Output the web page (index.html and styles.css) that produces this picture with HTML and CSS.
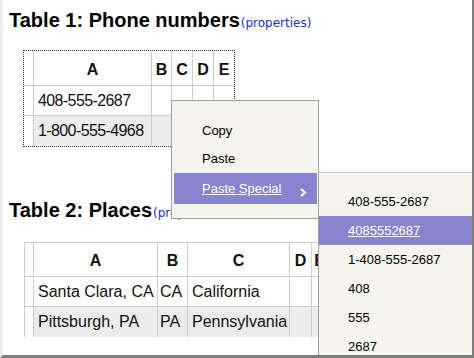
FILE: index.html
```html
<!DOCTYPE html>
<html>
<head>
<meta charset="utf-8">
<link rel="stylesheet" href="styles.css">
</head>
<body>
<div class="frame">
  <h1 class="title">Table 1: Phone numbers<span class="props">(properties)</span></h1>
  <div class="t1">
    <div class="grid g1">
      <div class="c"></div><div class="c h">A</div><div class="c h">B</div><div class="c h">C</div><div class="c h">D</div><div class="c h last">E</div>
      <div class="c"></div><div class="c num">408-555-2687</div><div class="c"></div><div class="c"></div><div class="c"></div><div class="c last"></div>
      <div class="c end"></div><div class="c end g num">1-800-555-4968</div><div class="c end g"></div><div class="c end g"></div><div class="c end g"></div><div class="c end g last"></div>
    </div>
  </div>
  <h1 class="title t2title">Table 2: Places<span class="props">(properties)</span></h1>
  <div class="t2">
    <div class="grid g2">
      <div class="c"></div><div class="c h">A</div><div class="c h">B</div><div class="c h">C</div><div class="c h">D</div><div class="c h">E</div><div class="c"></div>
      <div class="c"></div><div class="c">Santa Clara, CA</div><div class="c nb">CA</div><div class="c">California</div><div class="c"></div><div class="c"></div><div class="c"></div>
      <div class="c end"></div><div class="c end g">Pittsburgh, PA</div><div class="c end g nb">PA</div><div class="c end g">Pennsylvania</div><div class="c end g"></div><div class="c end g"></div><div class="c end g"></div>
    </div>
  </div>

  <div class="menu">
    <div class="mi m1">Copy</div>
    <div class="mi m2">Paste</div>
    <div class="mi m3 sel">Paste Special<svg class="arrow" width="7" height="9" viewBox="0 0 7 9"><polyline points="1,1 5,4.5 1,8" fill="none" stroke="#fff" stroke-width="2"/></svg></div>
  </div>
  <div class="sub">
    <div class="si">408-555-2687</div>
    <div class="si sel">4085552687</div>
    <div class="si">1-408-555-2687</div>
    <div class="si">408</div>
    <div class="si">555</div>
    <div class="si">2687</div>
  </div>
</div>
</body>
</html>
```
FILE: styles.css
```css
html, body {
  margin: 0;
  padding: 0;
  background: #fff;
}
.frame {
  position: relative;
  width: 474px;
  height: 358px;
  box-sizing: border-box;
  border-left: 3px solid #ececec;
  border-right: 2px solid #7d7d7d;
  border-bottom: 3px solid #7d7d7d;
  background: #fff;
  overflow: hidden;
  padding-left: 6px;
  font-family: "Liberation Sans", Arial, sans-serif;
  color: #000;
}
.title {
  margin: 8px 0 0 0;
  font-size: 20px;
  line-height: 24px;
  font-weight: 700;
  white-space: nowrap;
}
.t2title {
  margin-top: 51px;
}
.props {
  font-family: "DejaVu Sans", Verdana, sans-serif;
  font-size: 12px;
  line-height: 12px;
  font-weight: 400;
  color: #2230c8;
  margin-left: 1px;
}
.t1 {
  margin: 18px 0 0 14px;
  width: max-content;
  border: 1px dotted #333;
}
.t2 {
  margin: 20px 0 0 15px;
  width: max-content;
  border-top: 1px solid #cdcdcd;
  border-left: 1px solid #cdcdcd;
}
.grid {
  display: grid;
}
.g1 {
  grid-template-columns: 10px 118px 20px 21px 21px 20px;
  grid-template-rows: 35px 30px 30px;
}
.g2 {
  grid-template-columns: 9px 124px 30px 102px 22px 16px 40px;
  grid-template-rows: 34px 30px 30px;
}
.c {
  box-sizing: border-box;
  border-right: 1px solid #cdcdcd;
  border-bottom: 1px solid #cdcdcd;
  display: flex;
  align-items: center;
  padding-left: 4px;
  font-size: 16px;
  white-space: nowrap;
  overflow: hidden;
  color: #111;
}
.c.nb {
  padding-left: 2px;
}
.c.num {
  letter-spacing: -0.6px;
}
.c.h {
  justify-content: center;
  padding: 3px 0 0 0;
  font-weight: 700;
}
.c.last {
  border-right: none;
}
.c.end {
  border-bottom: none;
}
.c.g {
  background: #ececec;
}
.menu {
  position: absolute;
  left: 168px;
  top: 100px;
  width: 148px;
  height: 119px;
  box-sizing: border-box;
  border: 1px solid #a0a0a0;
  background: #f5f5ee;
  padding: 15px 1px 0 2px;
}
.mi {
  position: relative;
  padding-left: 28px;
  font-size: 13px;
  color: #000;
  white-space: nowrap;
}
.m1 { height: 28px; line-height: 29px; }
.m2 { height: 29px; line-height: 29px; }
.m3 { height: 31px; line-height: 31px; }
.sel {
  background: #8984d0;
  color: #fff;
  text-decoration: underline;
}
.arrow {
  position: absolute;
  left: 126px;
  top: 15px;
}
.sub {
  position: absolute;
  left: 315px;
  top: 172px;
  width: 170px;
  height: 200px;
  box-sizing: border-box;
  border-left: 1px solid #a0a0a0;
  border-top: 1px solid #c8c8c8;
  background: #f5f5ee;
  padding-top: 14px;
}
.si {
  height: 29px;
  line-height: 29px;
  padding-left: 29px;
  font-size: 13px;
  color: #000;
  white-space: nowrap;
}
.si.sel {
  color: #fff;
}
```
